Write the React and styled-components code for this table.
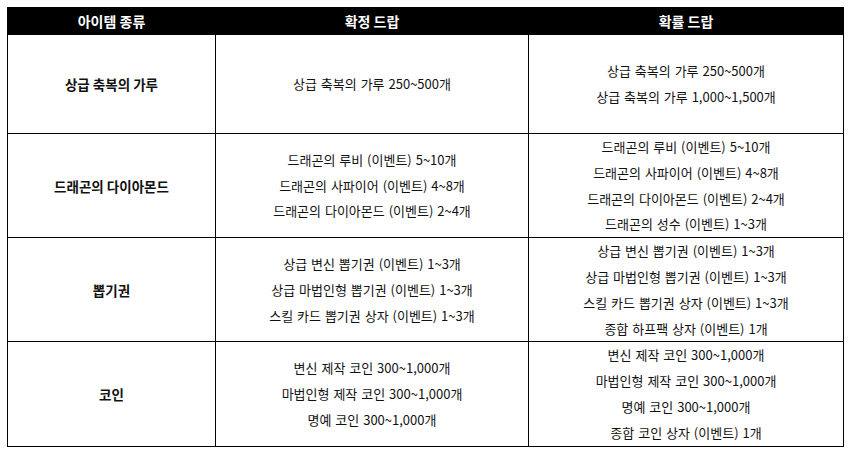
import React from 'react';
import styled, { createGlobalStyle } from 'styled-components';

const GlobalStyle = createGlobalStyle`
    html, body {
        margin: 0;
        padding: 0;
        background: #fff;
    }
    body {
        font-family: "Noto Sans CJK KR", "Noto Sans", sans-serif;
    }
`;

const Page = styled.div`
    padding: 7px 0 0 7px;
`;

const Table = styled.table`
    width: 836px;
    border-collapse: collapse;
    table-layout: fixed;
    font-size: 13px;
    color: #111;
`;

const HeadCell = styled.th`
    height: 26px;
    padding: 0;
    background: #000;
    color: #fff;
    font-weight: 700;
    font-size: 14px;
    border: 1px solid #000;
    text-align: center;
    vertical-align: middle;
`;

const Row = styled.tr`
    height: ${(p) => p.$height}px;
`;

const Cell = styled.td`
    padding: 0;
    border: 1px solid #000;
    text-align: center;
    vertical-align: middle;
    font-weight: ${(p) => (p.$bold ? 700 : 400)};
    font-size: ${(p) => (p.$bold ? 13.5 : 13)}px;
`;

const Line = styled.div`
    line-height: 25.8px;
    white-space: nowrap;
    word-spacing: 1px;
`;

const rows = [
    {
        title: '상급 축복의 가루',
        height: 99,
        fixed: ['상급 축복의 가루 250~500개'],
        chance: ['상급 축복의 가루 250~500개', '상급 축복의 가루 1,000~1,500개'],
    },
    {
        title: '드래곤의 다이아몬드',
        height: 103,
        fixed: ['드래곤의 루비 (이벤트) 5~10개', '드래곤의 사파이어 (이벤트) 4~8개', '드래곤의 다이아몬드 (이벤트) 2~4개'],
        chance: [
            '드래곤의 루비 (이벤트) 5~10개',
            '드래곤의 사파이어 (이벤트) 4~8개',
            '드래곤의 다이아몬드 (이벤트) 2~4개',
            '드래곤의 성수 (이벤트) 1~3개',
        ],
    },
    {
        title: '뽑기권',
        height: 103,
        fixed: ['상급 변신 뽑기권 (이벤트) 1~3개', '상급 마법인형 뽑기권 (이벤트) 1~3개', '스킬 카드 뽑기권 상자 (이벤트) 1~3개'],
        chance: [
            '상급 변신 뽑기권 (이벤트) 1~3개',
            '상급 마법인형 뽑기권 (이벤트) 1~3개',
            '스킬 카드 뽑기권 상자 (이벤트) 1~3개',
            '종합 하프팩 상자 (이벤트) 1개',
        ],
    },
    {
        title: '코인',
        height: 102,
        fixed: ['변신 제작 코인 300~1,000개', '마법인형 제작 코인 300~1,000개', '명예 코인 300~1,000개'],
        chance: ['변신 제작 코인 300~1,000개', '마법인형 제작 코인 300~1,000개', '명예 코인 300~1,000개', '종합 코인 상자 (이벤트) 1개'],
    },
];

export default function App() {
    return (
        <Page>
            <GlobalStyle />
            <Table>
                <colgroup>
                    <col style={{ width: 208 }} />
                    <col style={{ width: 313 }} />
                    <col style={{ width: 315 }} />
                </colgroup>
                <thead>
                    <tr>
                        <HeadCell>아이템 종류</HeadCell>
                        <HeadCell>확정 드랍</HeadCell>
                        <HeadCell>확률 드랍</HeadCell>
                    </tr>
                </thead>
                <tbody>
                    {rows.map((row) => (
                        <Row key={row.title} $height={row.height}>
                            <Cell $bold>{row.title}</Cell>
                            <Cell>
                                {row.fixed.map((text) => (
                                    <Line key={text}>{text}</Line>
                                ))}
                            </Cell>
                            <Cell>
                                {row.chance.map((text) => (
                                    <Line key={text}>{text}</Line>
                                ))}
                            </Cell>
                        </Row>
                    ))}
                </tbody>
            </Table>
        </Page>
    );
}
